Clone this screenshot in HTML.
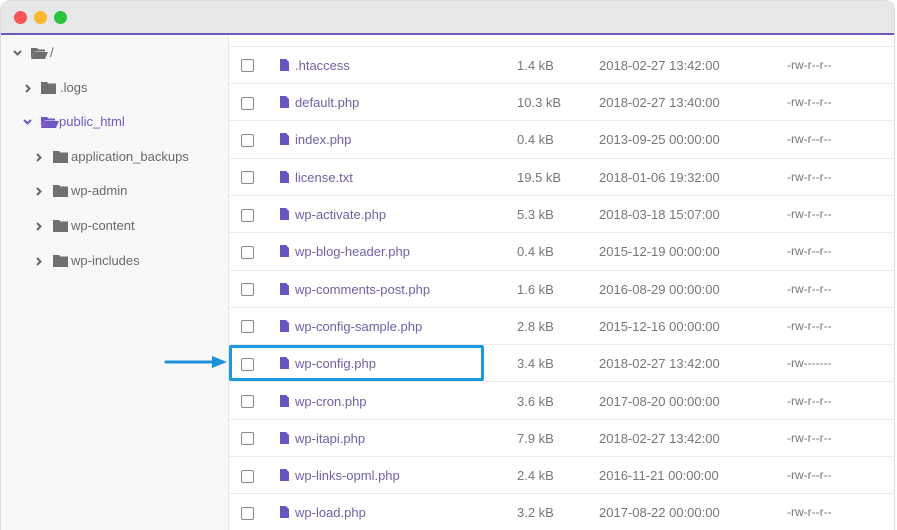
<!DOCTYPE html>
<html><head><meta charset="utf-8"><style>
*{margin:0;padding:0;box-sizing:border-box}
body{width:897px;height:516px;overflow:hidden;background:#fff;font-family:"Liberation Sans",sans-serif;position:relative}
.win{position:absolute;left:0;top:0;width:895px;height:530px;border-radius:10px 10px 0 0;overflow:hidden;border:1px solid #ddd;border-bottom:none}
.title{position:absolute;left:0;top:0;right:0;height:32px;background:#e7e7e7}
.dot{position:absolute;top:10px;width:13px;height:13px;border-radius:50%}
.pl{position:absolute;left:0;right:0;top:32px;height:2px;background:#6b5cbd;z-index:2}
.side{position:absolute;left:0;top:34px;width:228px;bottom:0;background:#f8f8f8;border-right:1px solid #e6e6e6}
.si{position:absolute;font-size:13px;color:#6a6a6a;height:16px;line-height:16px;white-space:nowrap}
.si svg{position:absolute}
.si span{position:absolute;top:0}
.main{position:absolute;left:228px;top:34px;right:0;bottom:0;overflow:hidden}
.row{position:absolute;left:0;right:0;height:37.3px;border-bottom:1px solid #ebebeb;font-size:13px;color:#777}
.cb{position:absolute;left:12px;top:12.5px;width:13px;height:13px;border:1.5px solid #8a8a8a;border-radius:2px;background:#fff}
.fi{position:absolute;left:51px;top:12px}
.nm{position:absolute;left:66px;top:11px;color:#6e62a8}
.sz{position:absolute;left:288px;top:11px}
.dt{position:absolute;left:370px;top:11px}
.pm{position:absolute;left:558px;top:11px;font-size:12px}
</style></head><body>
<div class="win">
<div class="title">
<div class="dot" style="left:13px;background:#fb5454"></div>
<div class="dot" style="left:33px;background:#fcb62f"></div>
<div class="dot" style="left:53px;background:#2bc43f"></div>
</div>
<div class="pl"></div>
<div class="side">
<div class="si" style="left:12px;top:10px"><svg width="9" height="6" style="left:0;top:5px"><path d="M1 1L4.5 4.5 8 1" stroke="#666" stroke-width="2" fill="none"/></svg><svg width="17" height="12" style="left:18px;top:2px"><path d="M0 1h6l1.5 1.5H14v2H4L0 11z" fill="#6e6e6e"/><path d="M3.5 5H17l-3 7H0z" fill="#6e6e6e"/></svg><span style="left:37px">/</span></div>
<div class="si" style="left:24px;top:45px"><svg width="6" height="9" style="left:0;top:4px"><path d="M1 1L4.5 4.5 1 8" stroke="#666" stroke-width="2" fill="none"/></svg><svg width="15" height="12" style="left:16px;top:2px"><path d="M0 0h6l1.5 1.5H15V12H0z" fill="#707070"/></svg><span style="left:35px">.logs</span></div>
<div class="si" style="left:22px;top:79px"><svg width="9" height="6" style="left:0;top:5px"><path d="M1 1L4.5 4.5 8 1" stroke="#6f57c4" stroke-width="2" fill="none"/></svg><svg width="18" height="12" style="left:18px;top:2px"><path d="M0 1h6l1.5 1.5H14v2H4L0 11z" fill="#6f57c4"/><path d="M3.5 5H18l-3 7H0z" fill="#6f57c4"/></svg><span style="left:36px;color:#6f57c4">public_html</span></div>
<div class="si" style="left:35px;top:114px"><svg width="6" height="9" style="left:0;top:4px"><path d="M1 1L4.5 4.5 1 8" stroke="#666" stroke-width="2" fill="none"/></svg><svg width="15" height="12" style="left:17px;top:2px"><path d="M0 0h6l1.5 1.5H15V12H0z" fill="#707070"/></svg><span style="left:35px">application_backups</span></div>
<div class="si" style="left:35px;top:148px"><svg width="6" height="9" style="left:0;top:4px"><path d="M1 1L4.5 4.5 1 8" stroke="#666" stroke-width="2" fill="none"/></svg><svg width="15" height="12" style="left:17px;top:2px"><path d="M0 0h6l1.5 1.5H15V12H0z" fill="#707070"/></svg><span style="left:35px">wp-admin</span></div>
<div class="si" style="left:35px;top:183px"><svg width="6" height="9" style="left:0;top:4px"><path d="M1 1L4.5 4.5 1 8" stroke="#666" stroke-width="2" fill="none"/></svg><svg width="15" height="12" style="left:17px;top:2px"><path d="M0 0h6l1.5 1.5H15V12H0z" fill="#707070"/></svg><span style="left:35px">wp-content</span></div>
<div class="si" style="left:35px;top:218px"><svg width="6" height="9" style="left:0;top:4px"><path d="M1 1L4.5 4.5 1 8" stroke="#666" stroke-width="2" fill="none"/></svg><svg width="15" height="12" style="left:17px;top:2px"><path d="M0 0h6l1.5 1.5H15V12H0z" fill="#707070"/></svg><span style="left:35px">wp-includes</span></div>
</div>
<div class="main">
<div class="row" style="top:-25.5px"><div class="cb" style="border-color:#ccc"></div></div>
<div class="row" style="top:11.8px"><div class="cb"></div><svg class="fi" width="9" height="12"><path d="M0 0h6l3 3v9H0z" fill="#6a55c0"/></svg><span class="nm">.htaccess</span><span class="sz">1.4 kB</span><span class="dt">2018-02-27 13:42:00</span><span class="pm">-rw-r--r--</span></div>
<div class="row" style="top:49.1px"><div class="cb"></div><svg class="fi" width="9" height="12"><path d="M0 0h6l3 3v9H0z" fill="#6a55c0"/></svg><span class="nm">default.php</span><span class="sz">10.3 kB</span><span class="dt">2018-02-27 13:40:00</span><span class="pm">-rw-r--r--</span></div>
<div class="row" style="top:86.4px"><div class="cb"></div><svg class="fi" width="9" height="12"><path d="M0 0h6l3 3v9H0z" fill="#6a55c0"/></svg><span class="nm">index.php</span><span class="sz">0.4 kB</span><span class="dt">2013-09-25 00:00:00</span><span class="pm">-rw-r--r--</span></div>
<div class="row" style="top:123.7px"><div class="cb"></div><svg class="fi" width="9" height="12"><path d="M0 0h6l3 3v9H0z" fill="#6a55c0"/></svg><span class="nm">license.txt</span><span class="sz">19.5 kB</span><span class="dt">2018-01-06 19:32:00</span><span class="pm">-rw-r--r--</span></div>
<div class="row" style="top:161px"><div class="cb"></div><svg class="fi" width="9" height="12"><path d="M0 0h6l3 3v9H0z" fill="#6a55c0"/></svg><span class="nm">wp-activate.php</span><span class="sz">5.3 kB</span><span class="dt">2018-03-18 15:07:00</span><span class="pm">-rw-r--r--</span></div>
<div class="row" style="top:198.3px"><div class="cb"></div><svg class="fi" width="9" height="12"><path d="M0 0h6l3 3v9H0z" fill="#6a55c0"/></svg><span class="nm">wp-blog-header.php</span><span class="sz">0.4 kB</span><span class="dt">2015-12-19 00:00:00</span><span class="pm">-rw-r--r--</span></div>
<div class="row" style="top:235.6px"><div class="cb"></div><svg class="fi" width="9" height="12"><path d="M0 0h6l3 3v9H0z" fill="#6a55c0"/></svg><span class="nm">wp-comments-post.php</span><span class="sz">1.6 kB</span><span class="dt">2016-08-29 00:00:00</span><span class="pm">-rw-r--r--</span></div>
<div class="row" style="top:272.9px"><div class="cb"></div><svg class="fi" width="9" height="12"><path d="M0 0h6l3 3v9H0z" fill="#6a55c0"/></svg><span class="nm">wp-config-sample.php</span><span class="sz">2.8 kB</span><span class="dt">2015-12-16 00:00:00</span><span class="pm">-rw-r--r--</span></div>
<div class="row" style="top:310.2px"><div class="cb"></div><svg class="fi" width="9" height="12"><path d="M0 0h6l3 3v9H0z" fill="#6a55c0"/></svg><span class="nm">wp-config.php</span><span class="sz">3.4 kB</span><span class="dt">2018-02-27 13:42:00</span><span class="pm">-rw-------</span></div>
<div class="row" style="top:347.5px"><div class="cb"></div><svg class="fi" width="9" height="12"><path d="M0 0h6l3 3v9H0z" fill="#6a55c0"/></svg><span class="nm">wp-cron.php</span><span class="sz">3.6 kB</span><span class="dt">2017-08-20 00:00:00</span><span class="pm">-rw-r--r--</span></div>
<div class="row" style="top:384.8px"><div class="cb"></div><svg class="fi" width="9" height="12"><path d="M0 0h6l3 3v9H0z" fill="#6a55c0"/></svg><span class="nm">wp-itapi.php</span><span class="sz">7.9 kB</span><span class="dt">2018-02-27 13:42:00</span><span class="pm">-rw-r--r--</span></div>
<div class="row" style="top:422.1px"><div class="cb"></div><svg class="fi" width="9" height="12"><path d="M0 0h6l3 3v9H0z" fill="#6a55c0"/></svg><span class="nm">wp-links-opml.php</span><span class="sz">2.4 kB</span><span class="dt">2016-11-21 00:00:00</span><span class="pm">-rw-r--r--</span></div>
<div class="row" style="top:459.4px"><div class="cb"></div><svg class="fi" width="9" height="12"><path d="M0 0h6l3 3v9H0z" fill="#6a55c0"/></svg><span class="nm">wp-load.php</span><span class="sz">3.2 kB</span><span class="dt">2017-08-22 00:00:00</span><span class="pm">-rw-r--r--</span></div>
</div>
</div>
<div style="position:absolute;left:229px;top:345px;width:255px;height:36px;border:3px solid #1c98dd;border-radius:2px"></div>
<svg style="position:absolute;left:164px;top:354px" width="66" height="16"><path d="M2 8H52" stroke="#1c8fd6" stroke-width="3" stroke-linecap="round"/><path d="M48 2L63 8 48 14z" fill="#1c8fd6"/></svg>
</body></html>
